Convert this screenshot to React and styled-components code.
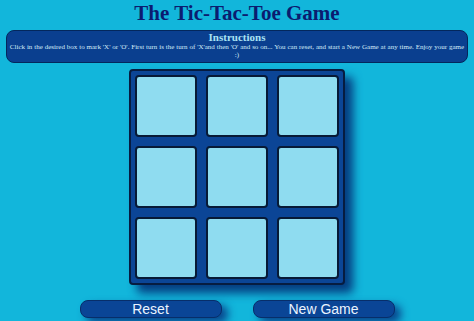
import React from "react";
import styled, { createGlobalStyle } from "styled-components";

const Global = createGlobalStyle`
  html, body { margin: 0; padding: 0; background: #12b6db; }
  body { font-family: "Liberation Serif", "Times New Roman", serif; overflow: hidden; }
`;

const Page = styled.div`
  width: 474px;
  height: 321px;
  padding: 0 6px;
  box-sizing: border-box;
  display: flex;
  flex-direction: column;
  align-items: stretch;
`;

const Title = styled.h1`
  margin: 0;
  padding-top: 1px;
  font-size: 21px;
  line-height: 24px;
  font-weight: bold;
  color: #0b1c70;
  text-align: center;
`;

const Instructions = styled.section`
  margin-top: 5px;
  background: #0a3f8f;
  border: 1px solid #03275c;
  border-radius: 8px;
  padding: 1px 1px 3px;
  text-align: center;
`;

const InstrHeading = styled.h2`
  margin: 0;
  font-size: 11px;
  line-height: 11px;
  font-weight: bold;
  color: #a9e3f4;
`;

const InstrText = styled.p`
  margin: 0;
  font-size: 7px;
  word-spacing: 0.15px;
  line-height: 8px;
  color: #d4ecf8;
`;

const Line = styled.span`
  white-space: nowrap;
`;

const Board = styled.div`
  align-self: center;
  margin-top: 6px;
  display: grid;
  grid-template-columns: repeat(3, 62px);
  grid-template-rows: repeat(3, 62px);
  gap: 9px;
  padding: 4px;
  background: #0b4596;
  border: 2px solid #061c40;
  border-radius: 4px;
  box-shadow: 8px 8px 10px #053c80;
`;

const Cell = styled.button`
  box-sizing: border-box;
  width: 62px;
  height: 62px;
  padding: 0;
  background: #8fdcf0;
  border: 2px solid #071a36;
  border-radius: 4px;
  cursor: pointer;
`;

const Controls = styled.div`
  margin-top: 15px;
  display: flex;
  justify-content: center;
  gap: 31px;
`;

const ActionButton = styled.button`
  width: 142px;
  height: 18px;
  padding: 0;
  background: #0a4596;
  color: #eaf4ff;
  border: 1px solid #072e6a;
  border-radius: 8px;
  font-family: "Liberation Sans", Arial, sans-serif;
  font-size: 14px;
  line-height: 16px;
  box-shadow: 6px 5px 8px #08468e;
  cursor: pointer;
`;

export default function App() {
  return (
    <>
      <Global />
      <Page>
        <Title>The Tic-Tac-Toe Game</Title>
        <Instructions>
          <InstrHeading>Instructions</InstrHeading>
          <InstrText>
            <Line>
              Click in the desired box to mark 'X' or 'O'. First turn is the turn of 'X'and then 'O' and so on... You can reset, and start a New Game at any time. Enjoy your game
            </Line>
            <br />
            :)
          </InstrText>
        </Instructions>
        <Board>
          {Array.from({ length: 9 }).map((_, i) => (
            <Cell key={i} aria-label={`cell ${i + 1}`} />
          ))}
        </Board>
        <Controls>
          <ActionButton>Reset</ActionButton>
          <ActionButton>New Game</ActionButton>
        </Controls>
      </Page>
    </>
  );
}
